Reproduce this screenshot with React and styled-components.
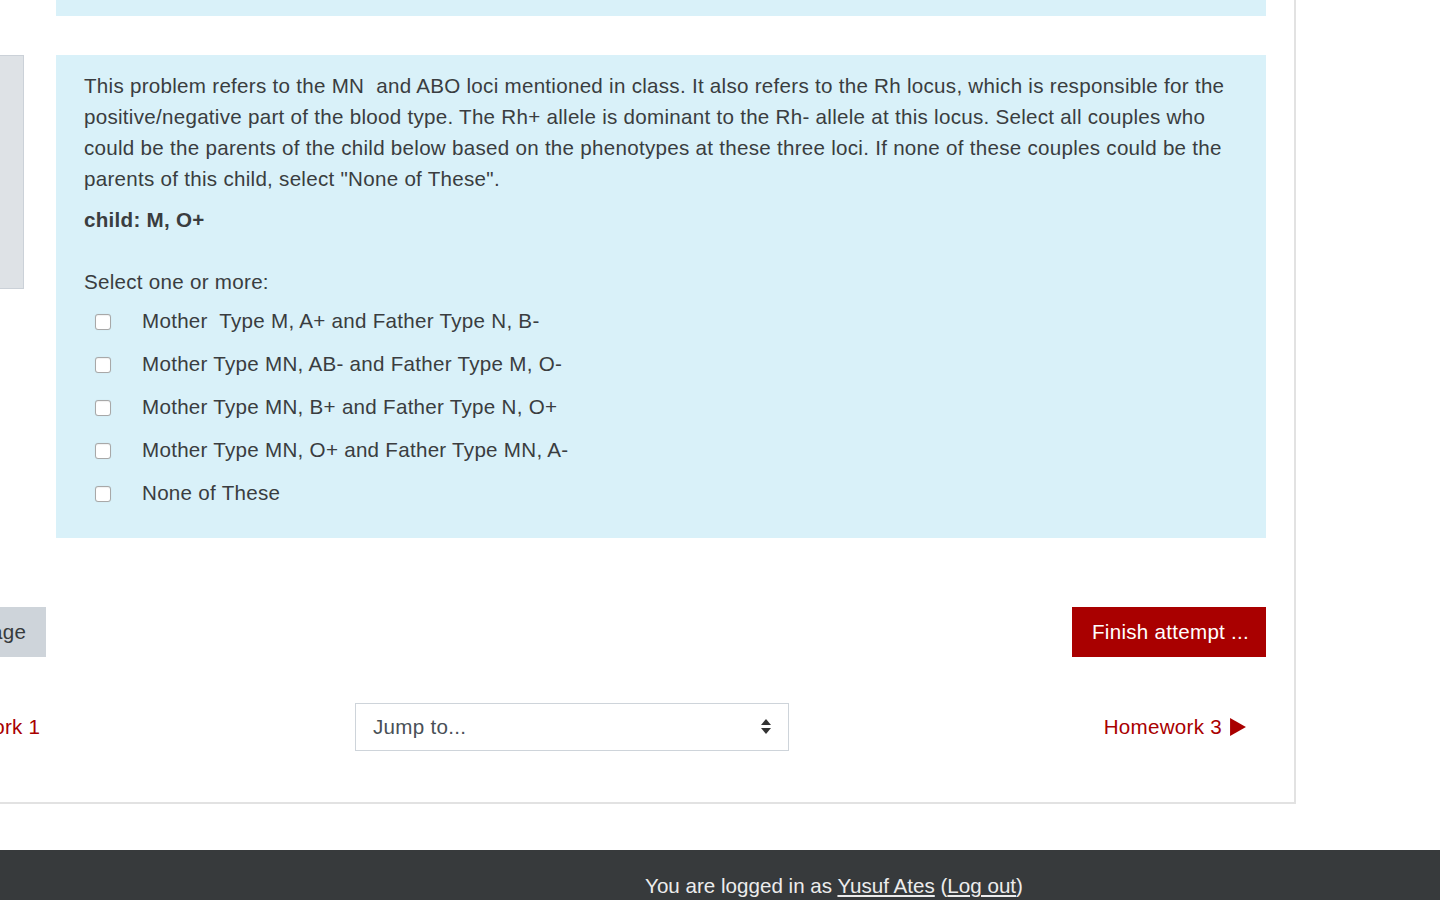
import React from "react";
import styled, { createGlobalStyle } from "styled-components";

const Global = createGlobalStyle`
  html, body { margin: 0; padding: 0; background: #fff; overflow: hidden; }
  body {
    font-family: "Liberation Sans", Arial, sans-serif;
    font-size: 20.6px;
    line-height: 1.5;
    letter-spacing: 0.27px;
    color: #3a3d40;
  }
  * { box-sizing: border-box; }
`;

const Page = styled.div`
  width: 1440px;
  height: 900px;
  overflow: hidden;
  display: flex;
  flex-direction: column;
`;

const Card = styled.div`
  margin-left: -150px;
  width: 1446px;
  padding: 0 28px 0 28px;
  border-right: 2px solid #e2e2e2;
  border-bottom: 2px solid #e2e2e2;
  display: flex;
  flex-direction: column;
`;

const QuestionRow = styled.div`
  display: flex;
  align-items: flex-start;
  gap: 32px;
  margin-bottom: ${(p) => p.$mb || 0}px;
`;

const InfoBox = styled.div`
  width: 146px;
  height: ${(p) => p.$h}px;
  flex: none;
  background: #dee2e6;
  border: 1px solid #cbd1d8;
  visibility: ${(p) => (p.$hidden ? "hidden" : "visible")};
`;

const Formulation = styled.div`
  flex: 1;
  background: #d9f1f9;
  min-height: ${(p) => p.$h || 0}px;
  padding: ${(p) => (p.$empty ? "0" : "16px 28px 24px 28px")};
`;

const Para = styled.p`
  margin: 0 0 ${(p) => p.$mb || 0}px 0;
  font-weight: ${(p) => (p.$strong ? 600 : 400)};
  min-height: 31px;
`;

const Prompt = styled.div`
  margin-bottom: 2px;
`;

const Options = styled.div`
  display: flex;
  flex-direction: column;
`;

const OptionRow = styled.label`
  display: flex;
  align-items: center;
  height: 43px;
  padding-left: 11px;
`;

const OptionText = styled.span`
  white-space: pre;
`;

const Check = styled.input`
  appearance: none;
  -webkit-appearance: none;
  margin: 2px 31px 0 0;
  width: 16px;
  height: 16px;
  border: 1px solid #a8a8a8;
  border-radius: 3px;
  background: #fff;
  box-shadow: inset 0 1px 1px rgba(0, 0, 0, 0.06), 0 0 1px rgba(0, 0, 0, 0.15);
  flex: none;
`;

const ButtonRow = styled.div`
  display: flex;
  justify-content: space-between;
  margin-top: 69px;
`;

const Button = styled.button`
  font: inherit;
  letter-spacing: inherit;
  height: 50px;
  padding: ${(p) => (p.$primary ? "0 19px" : "0 19px 0 12px")};
  white-space: nowrap;
  border: 1px solid ${(p) => (p.$primary ? "#a90000" : "#ced4da")};
  background: ${(p) => (p.$primary ? "#a90000" : "#ced4da")};
  color: ${(p) => (p.$primary ? "#fff" : "#373a3c")};
  border-radius: 0;
  width: ${(p) => (p.$w ? `${p.$w}px` : "auto")};
`;

const NavRow = styled.div`
  display: grid;
  grid-template-columns: 1fr 434px 1fr;
  align-items: center;
  margin-top: 46px;
  margin-bottom: 51px;
`;

const NavLink = styled.a`
  color: #a90000;
  text-decoration: none;
  display: flex;
  align-items: center;
  gap: 8px;
  white-space: nowrap;
  justify-self: ${(p) => (p.$right ? "end" : "start")};
  padding: 0 20px;
`;

const Select = styled.div`
  height: 48px;
  border: 1px solid #ced4da;
  background: #fff;
  color: #495057;
  display: flex;
  align-items: center;
  justify-content: space-between;
  padding: 0 17px 0 17px;
`;

const Footer = styled.footer`
  margin-top: 46px;
  flex: 1;
  background: #373a3c;
  color: #ececec;
  padding: 21px 0 0 228px;
  text-align: center;
  letter-spacing: 0;
`;

const FooterLink = styled.a`
  color: #ececec;
  text-decoration: underline;
`;

const Tri = ({ dir = "right", size = 16, color = "#a90000" }) => (
  <svg width={size} height={size + 2} viewBox="0 0 15 17">
    <polygon
      points={dir === "right" ? "0,0 15,8.5 0,17" : "15,0 0,8.5 15,17"}
      fill={color}
    />
  </svg>
);

const UpDown = () => (
  <svg width="10" height="16" viewBox="0 0 10 16">
    <polygon points="5,0 10,6 0,6" fill="#333" />
    <polygon points="0,9 10,9 5,15" fill="#333" />
  </svg>
);

const options = [
  "Mother  Type M, A+ and Father Type N, B-",
  "Mother Type MN, AB- and Father Type M, O-",
  "Mother Type MN, B+ and Father Type N, O+",
  "Mother Type MN, O+ and Father Type MN, A-",
  "None of These",
];

export default function App() {
  return (
    <>
      <Global />
      <Page>
        <Card>
          <QuestionRow $mb={39}>
            <InfoBox $h={16} $hidden />
            <Formulation $empty $h={16} />
          </QuestionRow>
          <QuestionRow>
            <InfoBox $h={234} />
            <Formulation>
              <Para $mb={10} style={{ whiteSpace: "pre-wrap" }}>
                {
                  'This problem refers to the MN  and ABO loci mentioned in class. It also refers to the Rh locus, which is responsible for the positive/negative part of the blood type. The Rh+ allele is dominant to the Rh- allele at this locus. Select all couples who could be the parents of the child below based on the phenotypes at these three loci. If none of these couples could be the parents of this child, select "None of These".'
                }
              </Para>
              <Para $strong>child: M, O+</Para>
              <Para>{"\u00a0"}</Para>
              <Prompt>Select one or more:</Prompt>
              <Options>
                {options.map((o) => (
                  <OptionRow key={o}>
                    <Check type="checkbox" />
                    <OptionText>{o}</OptionText>
                  </OptionRow>
                ))}
              </Options>
            </Formulation>
          </QuestionRow>
          <ButtonRow>
            <Button>Previous page</Button>
            <Button $primary $w={194}>
              Finish attempt ...
            </Button>
          </ButtonRow>
          <NavRow>
            <NavLink href="#">
              <Tri dir="left" />
              Homework 1
            </NavLink>
            <Select>
              <span>Jump to...</span>
              <UpDown />
            </Select>
            <NavLink href="#" $right>
              Homework 3
              <Tri />
            </NavLink>
          </NavRow>
        </Card>
        <Footer>
          You are logged in as <FooterLink href="#">Yusuf Ates</FooterLink> (
          <FooterLink href="#">Log out</FooterLink>)
        </Footer>
      </Page>
    </>
  );
}
